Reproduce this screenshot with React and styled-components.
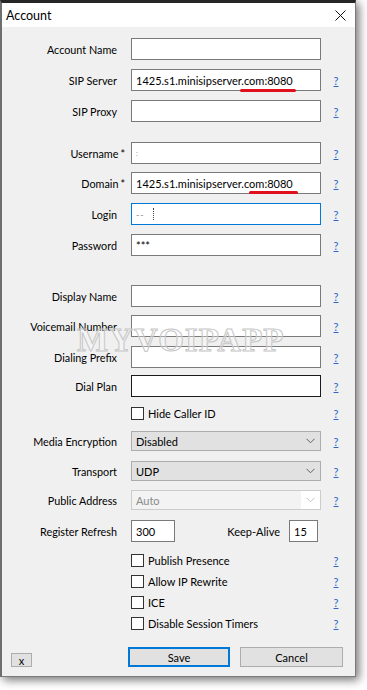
import React from 'react';
import styled, { createGlobalStyle } from 'styled-components';

const Global = createGlobalStyle`
  html, body { margin: 0; padding: 0; background: #ffffff; }
  body { font-family: Lato, "Noto Sans", sans-serif; }
`;

const Page = styled.div`
  width: 367px;
  height: 690px;
  overflow: hidden;
  background: #ffffff;
`;

const Window = styled.div`
  width: 353px;
  border-left: 2px solid #6e6e6e;
  border-right: 1px solid #7a7a7a;
  border-top: 3px solid #262626;
  border-bottom: 1px solid #7a7a7a;
  box-shadow: 3px 3px 9px rgba(0, 0, 0, 0.55);
  background: #f0f0f0;
`;

const TitleBar = styled.div`
  height: 24px;
  background: #ffffff;
  display: flex;
  align-items: center;
  justify-content: space-between;
  padding: 0 9px 0 4px;
`;

const Title = styled.span`
  font-size: 12.5px;
  color: #000;
`;

const Body = styled.div`
  position: relative;
  padding: 0 0 9px 0;
`;

const Row = styled.div`
  display: grid;
  grid-template-columns: 129px 190px 30px;
  align-items: center;
  height: ${(p) => p.$h || 22}px;
  margin-top: ${(p) => p.$mt || 0}px;
`;

const Label = styled.div`
  text-align: right;
  padding-right: 14px;
  font-size: 10.8px;
  color: #000;
  white-space: nowrap;
`;

const Req = styled.span`
  margin-left: 2px;
  margin-right: -8px;
`;

const borderColors = { normal: '#7a7a7a', focus: '#0078d7', hover: '#1a1a1a' };

const TextInput = styled.div`
  position: relative;
  box-sizing: border-box;
  height: 22px;
  width: ${(p) => (p.$w ? `${p.$w}px` : '100%')};
  border: 1px solid ${(p) => borderColors[p.$state || 'normal']};
  background: #ffffff;
  padding: 0 4px;
  font-size: 11px;
  color: #000;
  display: flex;
  align-items: center;
  white-space: nowrap;
`;

const Mark = styled.span`
  position: absolute;
  left: ${(p) => p.$l}px;
  top: ${(p) => p.$t}px;
  width: ${(p) => p.$w}px;
  height: 3px;
  border-radius: 2px;
  background: #e0101c;
`;

const Select = styled.div`
  box-sizing: border-box;
  height: 20px;
  border: 1px solid ${(p) => (p.$disabled ? '#cccccc' : '#adadad')};
  background: ${(p) => (p.$disabled ? '#f3f3f3' : '#e1e1e1')};
  color: ${(p) => (p.$disabled ? '#8a8a8a' : '#000')};
  font-size: 11px;
  display: flex;
  align-items: center;
  padding-left: 4px;
`;

const SelectText = styled.span`
  flex: 1;
`;

const Chevron = styled.span`
  width: 19px;
  height: 100%;
  display: flex;
  align-items: center;
  justify-content: center;
  background: ${(p) => (p.$disabled ? '#ffffff' : 'transparent')};
`;

const Help = styled.a`
  justify-self: center;
  font-size: 11px;
  color: #2a66c4;
  text-decoration: underline;
  cursor: pointer;
`;

const CheckLine = styled.label`
  display: flex;
  align-items: center;
  gap: 4px;
  font-size: 11px;
  color: #000;
  white-space: nowrap;
`;

const Box = styled.span`
  box-sizing: border-box;
  width: 13px;
  height: 13px;
  border: 1px solid #333333;
  background: #ffffff;
`;

const Pair = styled.div`
  display: flex;
  align-items: center;
  padding-right: 3px;
`;

const InlineLabel = styled.span`
  font-size: 11px;
  margin-left: auto;
  margin-right: 9px;
`;

const Buttons = styled.div`
  display: flex;
  align-items: flex-end;
  margin-top: 13px;
  height: 20px;
  padding-left: 9px;
`;

const Button = styled.button`
  box-sizing: border-box;
  width: ${(p) => p.$w}px;
  height: ${(p) => p.$h || 20}px;
  margin-left: ${(p) => p.$ml || 0}px;
  border: ${(p) => (p.$primary ? '2px solid #0078d7' : '1px solid #adadad')};
  background: #e1e1e1;
  font-family: inherit;
  font-size: 11px;
  color: #000;
  padding: 0;
  display: flex;
  align-items: center;
  justify-content: center;
`;

const Watermark = styled.div`
  position: absolute;
  left: 75px;
  top: 290px;
  font-family: "Liberation Serif", serif;
  font-weight: bold;
  font-size: 33px;
  letter-spacing: 1px;
  color: rgba(255, 255, 255, 0.3);
  -webkit-text-stroke: 1px #c6c6c6;
  pointer-events: none;
  line-height: 24px;
  height: 24px;
`;

const Scribble = styled.span`
  color: #8a8a8a;
  font-size: ${(p) => p.$s || 9}px;
  letter-spacing: 1px;
`;

const VDots = styled.span`
  display: inline-block;
  width: 1px;
  height: 12px;
  margin-left: 8px;
  border-left: 1px dotted #444;
`;

const ChevronIcon = ({ color }) => (
  <svg width="9" height="6" viewBox="0 0 9 6">
    <polyline points="0.5,0.8 4.5,4.8 8.5,0.8" fill="none" stroke={color} strokeWidth="1" />
  </svg>
);

const CloseIcon = () => (
  <svg width="11" height="11" viewBox="0 0 11 11">
    <path d="M0.5 0.5 L10.5 10.5 M10.5 0.5 L0.5 10.5" stroke="#111" strokeWidth="1" />
  </svg>
);

const Field = ({ label, req, value, state, mt, help = true, children }) => (
  <Row $mt={mt}>
    <Label>
      {label}
      {req && <Req>*</Req>}
    </Label>
    <TextInput $state={state}>
      {value}
      {children}
    </TextInput>
    {help ? <Help>?</Help> : <span />}
  </Row>
);

const Combo = ({ label, value, disabled, mt }) => (
  <Row $mt={mt}>
    <Label>{label}</Label>
    <Select $disabled={disabled}>
      <SelectText>{value}</SelectText>
      <Chevron $disabled={disabled}>
        <ChevronIcon color={disabled ? '#c4c4c4' : '#606060'} />
      </Chevron>
    </Select>
    <Help>?</Help>
  </Row>
);

const Check = ({ label, mt, h }) => (
  <Row $mt={mt} $h={h}>
    <span />
    <CheckLine>
      <Box />
      {label}
    </CheckLine>
    <Help>?</Help>
  </Row>
);

export default function App() {
  return (
    <Page>
      <Global />
      <Window>
        <TitleBar>
          <Title>Account</Title>
          <CloseIcon />
        </TitleBar>
        <Body>
          <Field label="Account Name" mt={11} help={false} />
          <Field label="SIP Server" mt={9} value="1425.s1.minisipserver.com:8080">
            <Mark $l={108} $t={19} $w={56} />
          </Field>
          <Field label="SIP Proxy" mt={9} />

          <Field label="Username" req mt={20}>
            <Scribble $s={7}>:</Scribble>
          </Field>
          <Field label="Domain" req mt={8} value="1425.s1.minisipserver.com:8080">
            <Mark $l={117} $t={18} $w={49} />
          </Field>
          <Field label="Login" mt={9} state="focus">
            <Scribble>-‐</Scribble>
            <VDots />
          </Field>
          <Field label="Password" mt={9} value="***" />

          <Field label="Display Name" mt={29} />
          <Field label="Voicemail Number" mt={8} />
          <Field label="Dialing Prefix" mt={9} />
          <Field label="Dial Plan" mt={7} state="hover" />

          <Check label="Hide Caller ID" mt={5} h={22} />

          <Combo label="Media Encryption" value="Disabled" mt={6} />
          <Combo label="Transport" value="UDP" mt={8} />
          <Combo label="Public Address" value="Auto" disabled mt={7} />

          <Row $mt={9}>
            <Label>Register Refresh</Label>
            <Pair>
              <TextInput $w={44}>300</TextInput>
              <InlineLabel>Keep-Alive</InlineLabel>
              <TextInput $w={29}>15</TextInput>
            </Pair>
            <span />
          </Row>

          <Check label="Publish Presence" mt={8} h={21} />
          <Check label="Allow IP Rewrite" h={21} />
          <Check label="ICE" h={21} />
          <Check label="Disable Session Timers" h={21} />

          <Buttons>
            <Button $w={21} $h={14}>x</Button>
            <Button $w={102} $ml={96} $primary>Save</Button>
            <Button $w={103} $ml={10}>Cancel</Button>
          </Buttons>

          <Watermark>MYVOIPAPP</Watermark>
        </Body>
      </Window>
    </Page>
  );
}
